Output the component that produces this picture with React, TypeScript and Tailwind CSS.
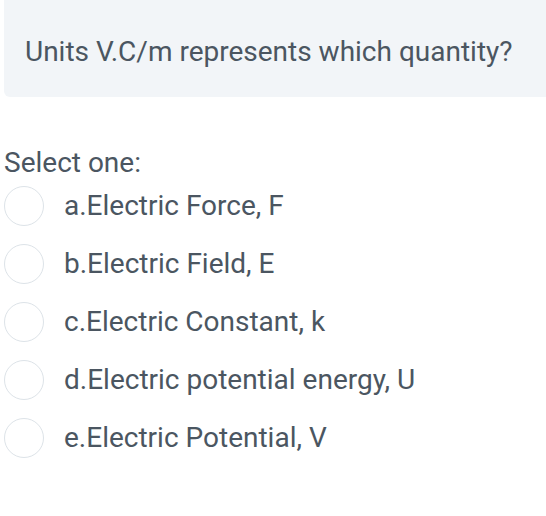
import React from "react";

const options = [
  "a.Electric Force, F",
  "b.Electric Field, E",
  "c.Electric Constant, k",
  "d.Electric potential energy, U",
  "e.Electric Potential, V",
];

export default function App() {
  return (
    <div className="w-[546px] h-[516px] bg-white text-[#4b5661]" style={{ fontFamily: "Roboto, sans-serif" }}>
      <div className="ml-[4px] h-[97px] bg-[#f2f5f8] rounded-bl-[6px] flex items-center pl-[21px] pt-[6px]">
        <span className="text-[28px] leading-[32px]">Units V.C/m represents which quantity?</span>
      </div>
      <div className="pt-[52px] pl-[4px]">
        <div className="text-[28px] leading-[28px]">Select one:</div>
        <div className="flex flex-col">
          {options.map((o) => (
            <div key={o} className="flex items-center h-[58px]">
              <div className="w-[40px] h-[40px] rounded-full border-[1.5px] border-[#dde3e8] bg-white shrink-0" />
              <span className="ml-[20px] text-[28px] leading-[34px]">{o}</span>
            </div>
          ))}
        </div>
      </div>
    </div>
  );
}
